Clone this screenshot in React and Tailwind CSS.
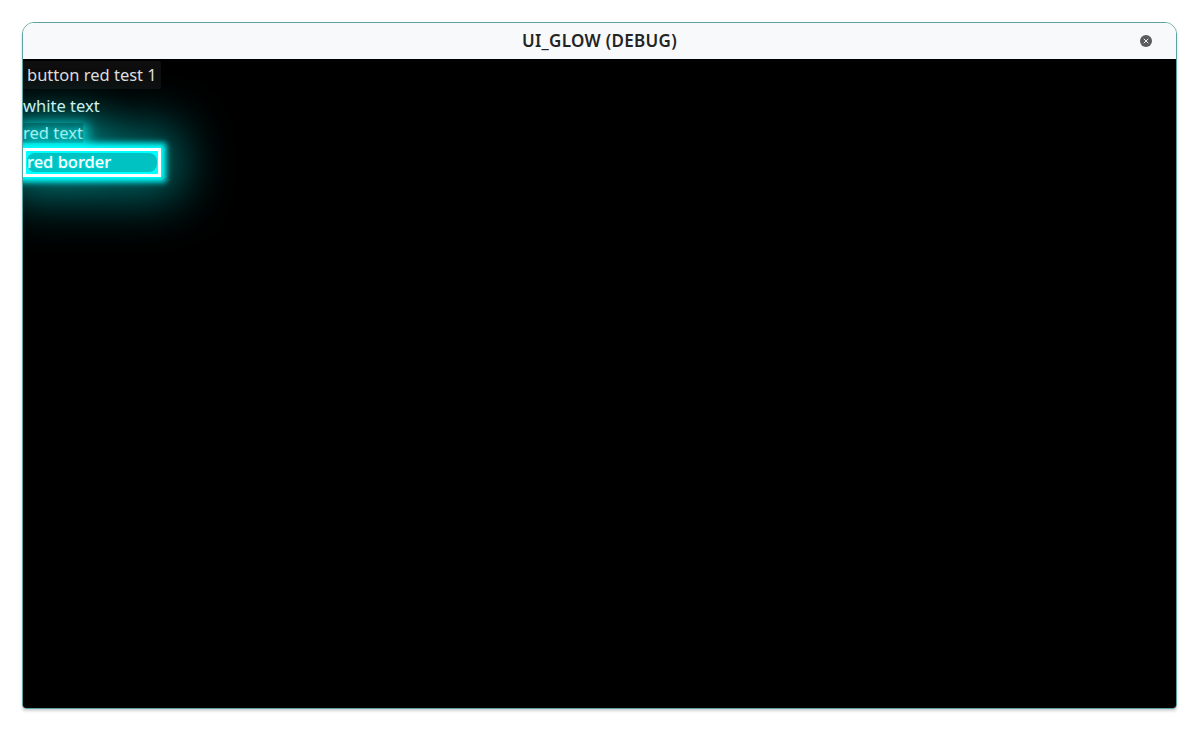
import { X } from 'lucide-react'

export default function App() {
  return (
    <div className="w-[1198px] h-[730px] bg-white pt-[22px] pl-[22px]" style={{ fontFamily: '"Noto Sans", "Open Sans", sans-serif' }}>
      <div className="w-[1155px] h-[687px] flex flex-col rounded-t-[12px] rounded-b-[4px] border-[1.5px] border-[#5ba3a2] overflow-hidden shadow-[0_2px_3px_rgba(0,0,0,0.18)]">
        {/* title bar */}
        <div className="h-[36px] shrink-0 bg-[#f8f9fb] flex items-center relative">
          <div className="flex-1 text-center text-[17px] font-semibold text-[#242424] tracking-[0.3px]">UI_GLOW (DEBUG)</div>
          <div className="absolute right-[24px] top-[12px] w-[12px] h-[12px] rounded-full bg-[#5b5b5b] flex items-center justify-center">
            <X size={8} strokeWidth={3} color="#f0f0f0" />
          </div>
        </div>

        {/* canvas */}
        <div className="flex-1 bg-black flex flex-col items-start text-[16.5px] leading-[20px] overflow-hidden">
          <button className="mt-[2px] h-[28px] px-[4px] bg-[#0e0e0e] rounded-[2px] text-[#dedede]">button red test 1</button>

          <div className="mt-[7px] h-[20px] text-white">white text</div>

          <div className="mt-[7px] h-[20px] text-[#e8ffff] bg-[rgba(0,200,200,0.35)] shadow-[0_5px_12px_6px_rgba(0,255,255,0.55),0_8px_40px_18px_rgba(0,190,190,0.4)] [text-shadow:0_0_6px_#00ffff,0_0_12px_#00ffff]">red text</div>

          <div className="mt-[5px] w-[138px] h-[29px] border-[3px] border-white bg-[#00ffff] px-[1px] py-[2px] shadow-[0_0_6px_5px_#00ffff,0_0_50px_20px_rgba(0,200,200,0.55)]">
            <div className="h-full bg-[#00c2c2] rounded-[8px] flex items-center text-white font-medium leading-none [text-shadow:0_0_2px_#00ffff]">
              red border
            </div>
          </div>
        </div>
      </div>
    </div>
  )
}
